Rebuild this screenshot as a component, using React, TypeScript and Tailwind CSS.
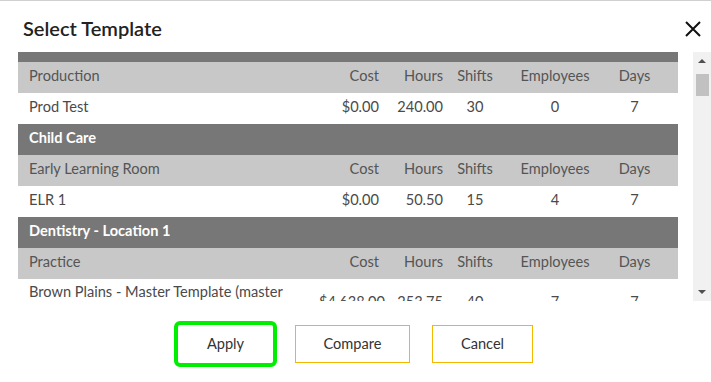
import React from "react";

type Row = { name: string; cost: string; hours: string; shifts: string; employees: string; days: string };
type Group = { title: string; section: string; rows: Row[] };

const groups: Group[] = [
  { title: "Production", section: "Production", rows: [{ name: "Prod Test", cost: "$0.00", hours: "240.00", shifts: "30", employees: "0", days: "7" }] },
  { title: "Child Care", section: "Early Learning Room", rows: [{ name: "ELR 1", cost: "$0.00", hours: "50.50", shifts: "15", employees: "4", days: "7" }] },
  {
    title: "Dentistry - Location 1",
    section: "Practice",
    rows: [{ name: "Brown Plains - Master Template (master template)", cost: "$4,638.00", hours: "253.75", shifts: "40", employees: "7", days: "7" }],
  },
];

const grid = "grid grid-cols-[301px_60px_64px_64px_96px_63px] pr-3";

function GroupBlock({ g, first }: { g: Group; first: boolean }) {
  return (
    <div>
      <div className={`flex h-[31px] items-center bg-[#777777] pb-[3px] pl-[11px] text-[14.6px] font-bold text-white ${first ? "-mt-[21px]" : ""}`}>
        {first ? "" : g.title}
      </div>
      <div className={`${grid} h-[31px] items-center bg-[#c8c8c8] pb-[3px] text-[14.6px] text-[#555555]`}>
        <div className="pl-[11px]">{g.section}</div>
        <div className="text-right">Cost</div>
        <div className="text-right">Hours</div>
        <div className="text-center">Shifts</div>
        <div className="text-center">Employees</div>
        <div className="text-center">Days</div>
      </div>
      {g.rows.map((r) => (
        <div key={r.name} className={`${grid} min-h-[31px] items-center bg-white pb-[7px] pt-[3px] text-[14.6px] leading-[20px] text-[#4a4a4a]`}>
          <div className="pl-[11px]">{r.name}</div>
          <div className="whitespace-nowrap text-right">{r.cost}</div>
          <div className="text-right">{r.hours}</div>
          <div className="text-center">{r.shifts}</div>
          <div className="text-center">{r.employees}</div>
          <div className="text-center">{r.days}</div>
        </div>
      ))}
    </div>
  );
}

export default function App() {
  return (
    <div className="h-[382px] w-[711px] overflow-hidden border-t border-[#d0d0d0] bg-white font-['Lato','Liberation_Sans',sans-serif]">
      <div className="flex h-[51px] items-center justify-between pl-[23px] pr-[10px] pt-[3px]">
        <h2 className="text-[20px] font-semibold text-[#222222]">Select Template</h2>
        <svg width="16" height="16" viewBox="0 0 16 16" className="mt-[1px]">
          <path d="M1 1 L15 15 M15 1 L1 15" stroke="#111" strokeWidth="2" />
        </svg>
      </div>
      <div className="flex h-[249px] pl-[18px]">
        <div className="h-full w-[660px] overflow-hidden">
          {groups.map((g, i) => (
            <GroupBlock key={g.title} g={g} first={i === 0} />
          ))}
        </div>
        <div className="ml-auto flex h-full w-[18px] flex-col items-center bg-[#f1f1f1]">
          <svg width="8" height="5" viewBox="0 0 8 5" className="mt-[6px]">
            <path d="M0 5 L4 1 L8 5 Z" fill="#505050" />
          </svg>
          <div className="mt-[11px] h-[22px] w-[13px] bg-[#c1c1c1]" />
          <div className="flex-1" />
          <svg width="8" height="5" viewBox="0 0 8 5" className="mb-[6px]">
            <path d="M0 0 L8 0 L4 4 Z" fill="#505050" />
          </svg>
        </div>
      </div>
      <div className="flex items-center justify-center gap-[22px] pt-[24px]">
        <button className="h-[38px] w-[95px] rounded-[2px] bg-white text-[14.6px] text-[#333333] outline outline-4 outline-[#00ee00]">Apply</button>
        <button className="h-[38px] w-[115px] border border-[#f5b800] bg-white text-[14.6px] text-[#333333]">Compare</button>
        <button className="h-[38px] w-[101px] border border-[#f5b800] bg-white text-[14.6px] text-[#333333]">Cancel</button>
      </div>
    </div>
  );
}
